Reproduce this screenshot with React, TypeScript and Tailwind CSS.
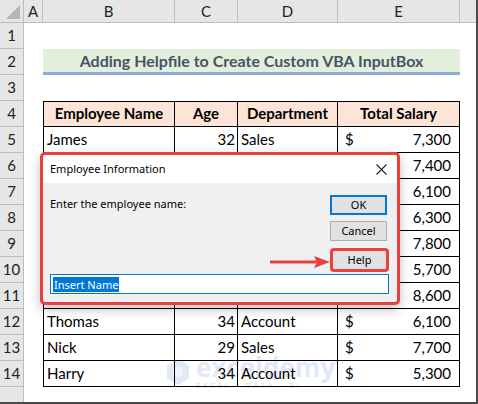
import React from "react";

const cols = ["A", "B", "C", "D", "E"];

type Row = { name?: string; age?: string; dept?: string; sal?: string };
const data: Row[] = [
  { name: "James", age: "32", dept: "Sales", sal: "7,300" },
  { sal: "7,400" },
  { sal: "6,100" },
  { sal: "6,300" },
  { sal: "7,800" },
  { sal: "5,700" },
  { sal: "8,600" },
  { name: "Thomas", age: "34", dept: "Account", sal: "6,100" },
  { name: "Nick", age: "29", dept: "Sales", sal: "7,700" },
  { name: "Harry", age: "34", dept: "Account", sal: "5,300" },
];

const xl = { fontFamily: "Lato, 'Liberation Sans', sans-serif" };
const ui = { fontFamily: "'Noto Sans', 'DejaVu Sans', sans-serif" };

function RowHead({ n }: { n: number }) {
  return (
    <div className="bg-[#e6e6e6] border-r border-b border-[#bdbdbd] flex items-center justify-center text-[15px] text-[#222]" style={xl}>
      {n}
    </div>
  );
}

export default function App() {
  const tableRows: React.ReactNode[] = [];
  data.forEach((r, i) => {
    const n = i + 5;
    tableRows.push(
      <React.Fragment key={n}>
        <RowHead n={n} />
        <div />
        <div className="border-l border-r border-b border-black flex items-end pl-[3px] pb-[2px] text-[15px] text-black" style={xl}>{r.name}</div>
        <div className="border-r border-b border-black flex items-end justify-end pr-[2px] pb-[2px] text-[15px] text-black" style={xl}>{r.age}</div>
        <div className="border-r border-b border-black flex items-end pl-[3px] pb-[2px] text-[15px] text-black" style={xl}>{r.dept}</div>
        <div className="border-r border-b border-black flex items-end justify-between pl-[7px] pr-[8px] pb-[2px] text-[15px] text-black" style={xl}>
          <span>$</span>
          <span>{r.sal}</span>
        </div>
        <div />
      </React.Fragment>
    );
  });

  return (
    <div className="relative w-[478px] h-[404px] overflow-hidden bg-white border-r-2 border-b-2 border-[#4a4a4a]">
      {/* watermark (behind the sheet) */}
      <div className="absolute left-[166px] top-[355px] flex items-center gap-[6px] opacity-50 pointer-events-none">
        <svg width="24" height="28" viewBox="0 0 24 28">
          <polygon points="12,1 23,7.5 23,20.5 12,27 1,20.5 1,7.5" fill="#c5d2ee" />
          <polygon points="12,8 17,11 17,17 12,20 7,17 7,11" fill="#e4eaf7" />
        </svg>
        <div className="flex flex-col leading-none">
          <span className="text-[26px] font-bold text-[#c5d2ee] leading-[24px]" style={{ fontFamily: "'Open Sans', sans-serif" }}>exceldemy</span>
          <span className="text-[8px] tracking-[2.5px] text-[#c0c0c0] mt-[2px]" style={{ fontFamily: "'Open Sans', sans-serif" }}>EXCEL · DATA · BI</span>
        </div>
      </div>

      <div className="relative grid grid-cols-[24px_19px_132px_63px_100px_122px_1fr] grid-rows-[23px_repeat(14,26px)_1fr] h-full">
        {/* header row */}
        <div className="bg-[#e6e6e6] border-r border-b border-[#bdbdbd] relative">
          <div className="absolute right-[3px] bottom-[3px] w-0 h-0 border-l-[14px] border-l-transparent border-b-[14px] border-b-[#b5b5b5]" />
        </div>
        {cols.map((c) => (
          <div key={c} className="bg-[#e6e6e6] border-r border-b border-[#bdbdbd] flex items-center justify-center text-[15px] text-[#222]" style={xl}>
            {c}
          </div>
        ))}
        <div className="bg-[#e6e6e6] border-b border-[#bdbdbd]" />

        {/* row 1 */}
        <RowHead n={1} />
        <div className="col-span-6" />

        {/* row 2 title */}
        <RowHead n={2} />
        <div />
        <div className="col-span-4 bg-[#e2efda] border-b-[3px] border-[#8eaadb] flex items-center justify-center text-[16px] font-bold text-[#44546a]" style={xl}>
          Adding Helpfile to Create Custom VBA InputBox
        </div>
        <div />

        {/* row 3 */}
        <RowHead n={3} />
        <div className="col-span-6" />

        {/* row 4 header */}
        <RowHead n={4} />
        <div />
        {["Employee Name", "Age", "Department", "Total Salary"].map((h, i) => (
          <div
            key={h}
            className={`bg-[#fce4d6] border-t border-r border-b border-black flex items-end justify-center pb-[2px] text-[15px] font-bold text-black ${i === 0 ? "border-l" : ""}`}
            style={xl}
          >
            {h}
          </div>
        ))}
        <div />

        {tableRows}

        <div className="bg-[#e6e6e6] border-r border-[#bdbdbd]" />
        <div className="col-span-6" />
      </div>

      {/* dialog */}
      <div className="absolute left-[40px] top-[152px] w-[360px] h-[153px] border-[3px] border-[#e8413f] rounded-[5px] bg-[#f0f0f0] flex flex-col overflow-hidden shadow-[0_4px_12px_rgba(0,0,0,0.25)]" style={ui}>
        <div className="h-[28px] bg-white flex items-center justify-between pl-[7px] pr-[10px] shrink-0">
          <span className="text-[11px] text-black">Employee Information</span>
          <svg width="11" height="11" viewBox="0 0 11 11">
            <path d="M0.5 0.5 L10.5 10.5 M10.5 0.5 L0.5 10.5" stroke="#222" strokeWidth="1.1" />
          </svg>
        </div>
        <div className="flex-1 flex flex-col">
          <div className="flex pt-[12px] pl-[7px] pr-[10px]">
            <div className="flex-1 text-[11px] text-black pt-[1px]">Enter the employee name:</div>
            <div className="w-[57px] flex flex-col items-start">
              <div className="w-[57px] h-[20px] border-2 border-[#0078d7] bg-[#e1e1e1] flex items-center justify-center text-[11px] text-black">OK</div>
              <div className="mt-[6px] w-[57px] h-[20px] border border-[#adadad] bg-[#e1e1e1] flex items-center justify-center text-[11px] text-black">Cancel</div>
              <div className="mt-[7px] w-[59px] h-[24px] border-[3px] border-[#e8413f] rounded-[4px] bg-[#e1e1e1] flex items-center justify-center text-[11px] text-black">Help</div>
            </div>
          </div>
          <div className="mt-[2px] ml-[7px] mr-[8px] h-[20px] border border-[#0078d7] bg-white flex items-center pl-[2px]">
            <span className="bg-[#0078d7] text-white text-[11px] leading-[15px] px-[1px]">Insert Name</span>
          </div>
        </div>
      </div>

      {/* arrow */}
      <svg className="absolute left-[270px] top-[255px]" width="62" height="14" viewBox="0 0 62 14">
        <path d="M1 7 H46" stroke="#e8413f" strokeWidth="3" strokeLinecap="round" />
        <polygon points="44,1 60,7 44,13 47,7" fill="#e8413f" />
      </svg>
    </div>
  );
}
